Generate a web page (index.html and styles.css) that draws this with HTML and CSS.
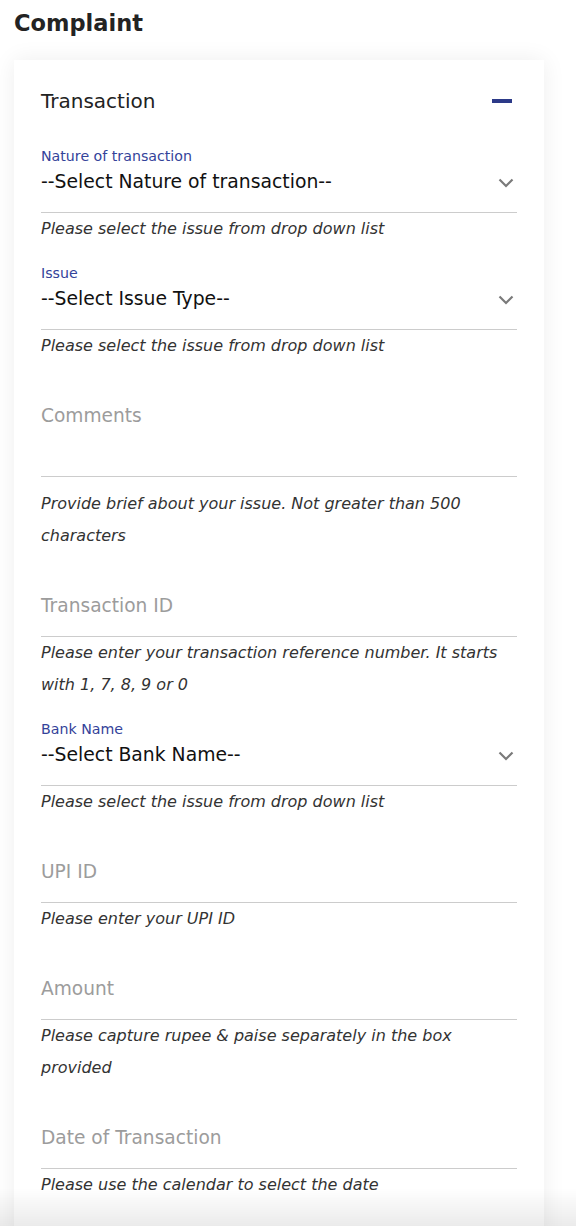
FILE: index.html
```html
<!DOCTYPE html>
<html lang="en">
<head>
<meta charset="utf-8">
<title>Complaint</title>
<link rel="stylesheet" href="styles.css">
</head>
<body>
<h1 class="page-title">Complaint</h1>
<section class="card">
  <div class="card-head">
    <h2 class="card-title">Transaction</h2>
    <span class="collapse-btn" aria-label="Collapse"></span>
  </div>

  <div class="field">
    <div class="label">Nature of transaction</div>
    <div class="control select">
      <span class="value">--Select Nature of transaction--</span>
      <svg class="chev" width="16" height="10" viewBox="0 0 16 10"><path d="M1.5 1.5 L8 8 L14.5 1.5" fill="none" stroke="#7a7a7a" stroke-width="2.2"/></svg>
    </div>
    <div class="help">Please select the issue from drop down list</div>
  </div>

  <div class="field">
    <div class="label">Issue</div>
    <div class="control select">
      <span class="value">--Select Issue Type--</span>
      <svg class="chev" width="16" height="10" viewBox="0 0 16 10"><path d="M1.5 1.5 L8 8 L14.5 1.5" fill="none" stroke="#7a7a7a" stroke-width="2.2"/></svg>
    </div>
    <div class="help">Please select the issue from drop down list</div>
  </div>

  <div class="field">
    <div class="label"></div>
    <div class="control textarea"><span class="placeholder">Comments</span></div>
    <div class="help">Provide brief about your issue. Not greater than 500<br>characters</div>
  </div>

  <div class="field">
    <div class="label"></div>
    <div class="control"><span class="placeholder">Transaction ID</span></div>
    <div class="help">Please enter your transaction reference number. It starts<br>with 1, 7, 8, 9 or 0</div>
  </div>

  <div class="field">
    <div class="label">Bank Name</div>
    <div class="control select">
      <span class="value">--Select Bank Name--</span>
      <svg class="chev" width="16" height="10" viewBox="0 0 16 10"><path d="M1.5 1.5 L8 8 L14.5 1.5" fill="none" stroke="#7a7a7a" stroke-width="2.2"/></svg>
    </div>
    <div class="help">Please select the issue from drop down list</div>
  </div>

  <div class="field">
    <div class="label"></div>
    <div class="control"><span class="placeholder">UPI ID</span></div>
    <div class="help">Please enter your UPI ID</div>
  </div>

  <div class="field">
    <div class="label"></div>
    <div class="control"><span class="placeholder">Amount</span></div>
    <div class="help">Please capture rupee &amp; paise separately in the box<br>provided</div>
  </div>

  <div class="field">
    <div class="label"></div>
    <div class="control"><span class="placeholder">Date of Transaction</span></div>
    <div class="help">Please use the calendar to select the date</div>
  </div>
</section>
<div class="bottom-fade"></div>
</body>
</html>
```

FILE: styles.css
```css
html, body {
  margin: 0;
  padding: 0;
  background: #ffffff;
}
body {
  font-family: "DejaVu Sans", "Open Sans", sans-serif;
  color: #222;
  overflow: hidden;
}
.page-title {
  margin: 8px 0 0 14px;
  font-size: 22.5px;
  line-height: 30px;
  font-weight: bold;
  color: #232323;
}
.card {
  margin: 22px 0 0 14px;
  width: 530px;
  box-sizing: border-box;
  padding: 29px 27px 40px 27px;
  background: #fff;
  box-shadow: 0 0 22px rgba(0, 0, 0, 0.07);
}
.card-head {
  display: flex;
  align-items: center;
  justify-content: space-between;
  height: 24px;
  margin-bottom: 33px;
}
.card-title {
  margin: 0;
  font-size: 20px;
  line-height: 24px;
  font-weight: normal;
  color: #222;
}
.collapse-btn {
  display: block;
  width: 20px;
  height: 4px;
  margin-right: 5px;
  background: #2c3a88;
}
.field {
  margin-top: 18px;
}
.label {
  height: 20px;
  font-size: 14.2px;
  line-height: 20px;
  color: #34439a;
}
.control {
  display: flex;
  align-items: center;
  justify-content: space-between;
  height: 30px;
  padding: 1px 0 15px 0;
  border-bottom: 1px solid #cccccc;
  font-size: 18.6px;
  line-height: 30px;
}
.control.select {
  font-size: 18.8px;
}
.control.textarea {
  align-items: flex-start;
  padding-bottom: 45px;
}
.control.textarea + .help {
  margin-top: 11px;
}
.value {
  color: #111;
}
.placeholder {
  color: #9c9c9c;
}
.chev {
  margin-right: 3px;
  margin-top: 2px;
}
.help {
  font-size: 16px;
  font-style: italic;
  line-height: 32px;
  color: #333;
}
.bottom-fade {
  position: fixed;
  left: 0;
  right: 0;
  bottom: 0;
  height: 38px;
  background: linear-gradient(to bottom, rgba(0, 0, 0, 0), rgba(0, 0, 0, 0.08));
  pointer-events: none;
}
```
